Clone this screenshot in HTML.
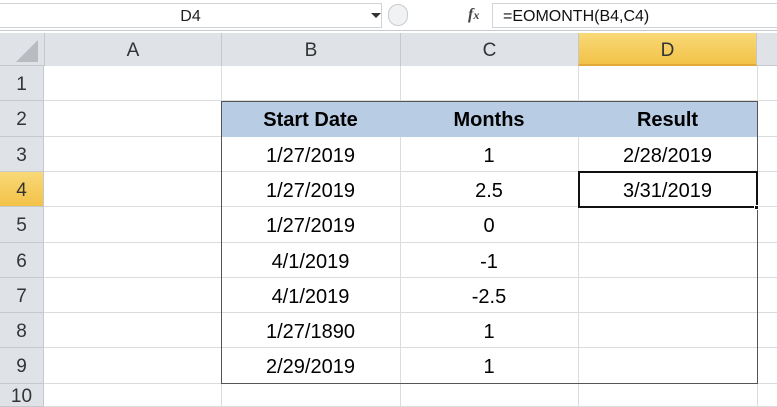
<!DOCTYPE html><html style="overflow:hidden;height:407px"><head><style>
body{margin:0;width:777px;height:407px;overflow:hidden;background:#fff;font-family:"Liberation Sans",sans-serif;position:relative}
div{position:absolute;box-sizing:border-box}
.h{background:#dfe3e8;color:#333;font-size:19px;text-align:center}
.c{font-size:20px;text-align:center;color:#000;padding-top:3px}
</style></head><body>
<div style="left:0;top:0;width:777px;height:31px;background:#fff;border-bottom:1px solid #c6c9cd"></div>
<div style="left:0;top:3px;width:382px;height:25px;border:1px solid #d0d3d7;border-left:none;font-size:16px;text-align:center;line-height:25px;color:#222">D4</div>
<div style="left:371px;top:13px;width:0;height:0;border-left:5px solid transparent;border-right:5px solid transparent;border-top:5px solid #333"></div>
<div style="left:388px;top:4px;width:20px;height:22px;border:1px solid #c8cbcf;border-radius:11px;background:#f1f2f4"></div>
<div style="left:468px;top:6px;font-family:'Liberation Serif',serif;font-style:italic;font-weight:bold;font-size:16px;color:#444">f<span style="font-size:12px">x</span></div>
<div style="left:492px;top:3px;width:285px;height:25px;border:1px solid #d0d3d7;border-right:none;font-size:16px;line-height:25px;padding-left:10px;color:#111">=EOMONTH(B4,C4)</div>
<div style="left:0;top:33px;width:777px;height:33px;background:#dfe3e8;border-bottom:1px solid #c5c9ce"></div>
<div style="left:16px;top:40px;width:0;height:0;border-left:22px solid transparent;border-bottom:22px solid #b8bcc1"></div>
<div class="h" style="left:44px;top:33px;width:177px;height:33px;line-height:35px;border-left:1px solid #c5c9ce">A</div>
<div class="h" style="left:221px;top:33px;width:179px;height:33px;line-height:35px;border-left:1px solid #c5c9ce">B</div>
<div class="h" style="left:400px;top:33px;width:178px;height:33px;line-height:35px;border-left:1px solid #c5c9ce">C</div>
<div class="h" style="left:578px;top:33px;width:179px;height:33px;line-height:35px;background:linear-gradient(#f9d978,#f2c247);border-left:1px solid #c5c9ce;border-right:1px solid #c5c9ce;border-bottom:2px solid #e2a93b">D</div>
<div style="left:0;top:66px;width:44px;height:341px;background:#dfe3e8;border-right:1px solid #c5c9ce"></div>
<div id="g"></div>
<script>
var t=[66,101,137,172,207,243,278,313,348,384,420];
var d=[null,["Start Date","Months","Result"],["1/27/2019","1","2/28/2019"],["1/27/2019","2.5","3/31/2019"],["1/27/2019","0",""],["4/1/2019","-1",""],["4/1/2019","-2.5",""],["1/27/1890","1",""],["2/29/2019","1",""],null];
var cx=[221,400,578,757],h="";
[221,400,578,757].forEach(function(x){h+='<div style="left:'+x+'px;top:66px;width:1px;height:341px;background:#dadcdd"></div>'});
for(var i=0;i<10;i++){var y=t[i],hh=Math.min(t[i+1],407)-t[i];
h+='<div style="left:0;top:'+y+'px;width:44px;height:'+hh+'px;background:'+(i==3?'linear-gradient(#f9d978,#f2c247)':'#dfe3e8')+';border-bottom:1px solid #c5c9ce;border-right:1px solid #c5c9ce;font-size:19px;color:#333;text-align:center;line-height:'+(hh+2)+'px">'+(i+1)+'</div>';
h+='<div style="left:44px;top:'+(y+hh-1)+'px;width:733px;height:1px;background:#dadcdd"></div>';
if(d[i]){for(var j=0;j<3;j++){h+='<div class="c" style="left:'+cx[j]+'px;top:'+y+'px;width:'+(cx[j+1]-cx[j])+'px;height:'+hh+'px;line-height:'+(hh-3)+'px;'+(i==1?'font-weight:bold;background:#b8cce4;':'')+'">'+d[i][j]+'</div>';}}}
h+='<div style="left:221px;top:101px;width:537px;height:283px;border:1px solid #555"></div>';
h+='<div style="left:578px;top:171px;width:180px;height:37px;border:2px solid #111"></div>';
h+='<div style="left:754px;top:205px;width:5px;height:5px;background:#111;border:1px solid #fff"></div>';
document.getElementById("g").outerHTML=h;
</script>
</body></html>
